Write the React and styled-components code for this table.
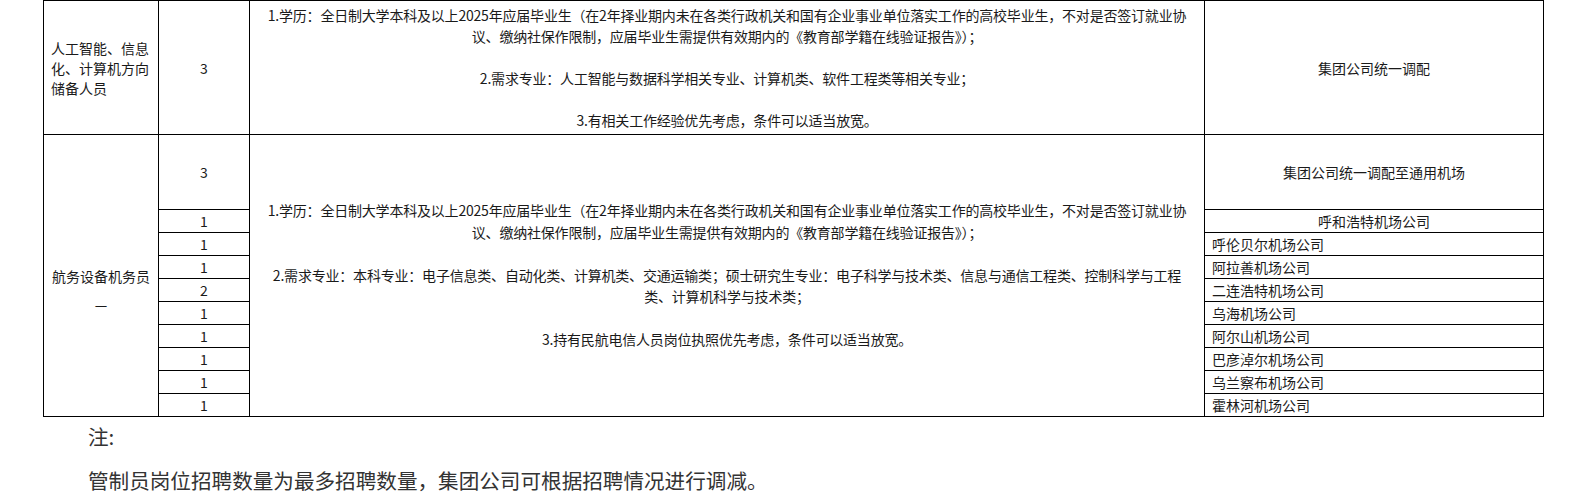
import React from "react";
import styled, { createGlobalStyle } from "styled-components";

const Global = createGlobalStyle`
  html, body { margin: 0; padding: 0; background: #fff; }
  body { font-family: "Noto Sans CJK SC", "Noto Sans", sans-serif; }
`;

const Page = styled.div`
  padding: 0 0 0 43px;
  width: 1546px;
`;

const Table = styled.table`
  border-collapse: collapse;
  table-layout: fixed;
  width: 1500px;
  font-family: "Noto Sans CJK SC", "Noto Sans", sans-serif;
  font-size: 14px;
  color: #1a1a1a;
`;

const Row = styled.tr`
  height: ${(p) => p.$h}px;
`;

const Cell = styled.td`
  border: 1px solid #000;
  padding: 0 ${(p) => (p.$align === "left" ? "7px" : "0")};
  text-align: ${(p) => p.$align || "center"};
  vertical-align: middle;
  line-height: ${(p) => p.$lh || 20}px;
  letter-spacing: ${(p) => (p.$tight ? "-0.2px" : "0")};
  white-space: nowrap;
  overflow: hidden;
`;

const Line = styled.div`
  white-space: nowrap;
`;

const Note = styled.div`
  margin-top: -3px;
  padding-left: 45px;
  font-family: "Noto Sans CJK SC", "Microsoft YaHei", sans-serif;
  font-size: 20.6px;
  line-height: 44px;
  color: #333;
`;

const edu = [
  "1.学历：全日制大学本科及以上2025年应届毕业生（在2年择业期内未在各类行政机关和国有企业事业单位落实工作的高校毕业生，不对是否签订就业协",
  "议、缴纳社保作限制，应届毕业生需提供有效期内的《教育部学籍在线验证报告》）；",
];

const Lines = ({ items }) => (
  <>
    {items.map((t, i) => (
      <Line key={i}>{t === "" ? "\u00a0" : t}</Line>
    ))}
  </>
);

const airports = [
  ["1", "呼和浩特机场公司", "center"],
  ["1", "呼伦贝尔机场公司", "left"],
  ["1", "阿拉善机场公司", "left"],
  ["2", "二连浩特机场公司", "left"],
  ["1", "乌海机场公司", "left"],
  ["1", "阿尔山机场公司", "left"],
  ["1", "巴彦淖尔机场公司", "left"],
  ["1", "乌兰察布机场公司", "left"],
  ["1", "霍林河机场公司", "left"],
];

export default function App() {
  return (
    <Page>
      <Global />
      <Table>
        <colgroup>
          <col style={{ width: 115 }} />
          <col style={{ width: 91 }} />
          <col style={{ width: 955 }} />
          <col style={{ width: 339 }} />
        </colgroup>
        <tbody>
          <Row $h={134}>
            <Cell $align="left" $lh={20}>
              <Lines items={["人工智能、信息", "化、计算机方向", "储备人员"]} />
            </Cell>
            <Cell>3</Cell>
            <Cell $lh={21} $tight>
              <Lines
                items={[
                  ...edu,
                  "",
                  "2.需求专业：人工智能与数据科学相关专业、计算机类、软件工程类等相关专业；",
                  "",
                  "3.有相关工作经验优先考虑，条件可以适当放宽。",
                ]}
              />
            </Cell>
            <Cell>集团公司统一调配</Cell>
          </Row>
          <Row $h={75}>
            <Cell rowSpan={10} $lh={28}>
              <Lines items={["", "航务设备机务员", "—"]} />
            </Cell>
            <Cell>3</Cell>
            <Cell rowSpan={10} $lh={21.5} $tight>
              <Lines
                items={[
                  ...edu,
                  "",
                  "2.需求专业：本科专业：电子信息类、自动化类、计算机类、交通运输类；硕士研究生专业：电子科学与技术类、信息与通信工程类、控制科学与工程",
                  "类、计算机科学与技术类；",
                  "",
                  "3.持有民航电信人员岗位执照优先考虑，条件可以适当放宽。",
                ]}
              />
            </Cell>
            <Cell>集团公司统一调配至通用机场</Cell>
          </Row>
          {airports.map(([n, name, align], i) => (
            <Row $h={23} key={i}>
              <Cell $lh={21}>{n}</Cell>
              <Cell $align={align} $lh={21}>
                {name}
              </Cell>
            </Row>
          ))}
        </tbody>
      </Table>
      <Note>
        <div>注:</div>
        <div>管制员岗位招聘数量为最多招聘数量，集团公司可根据招聘情况进行调减。</div>
      </Note>
    </Page>
  );
}
